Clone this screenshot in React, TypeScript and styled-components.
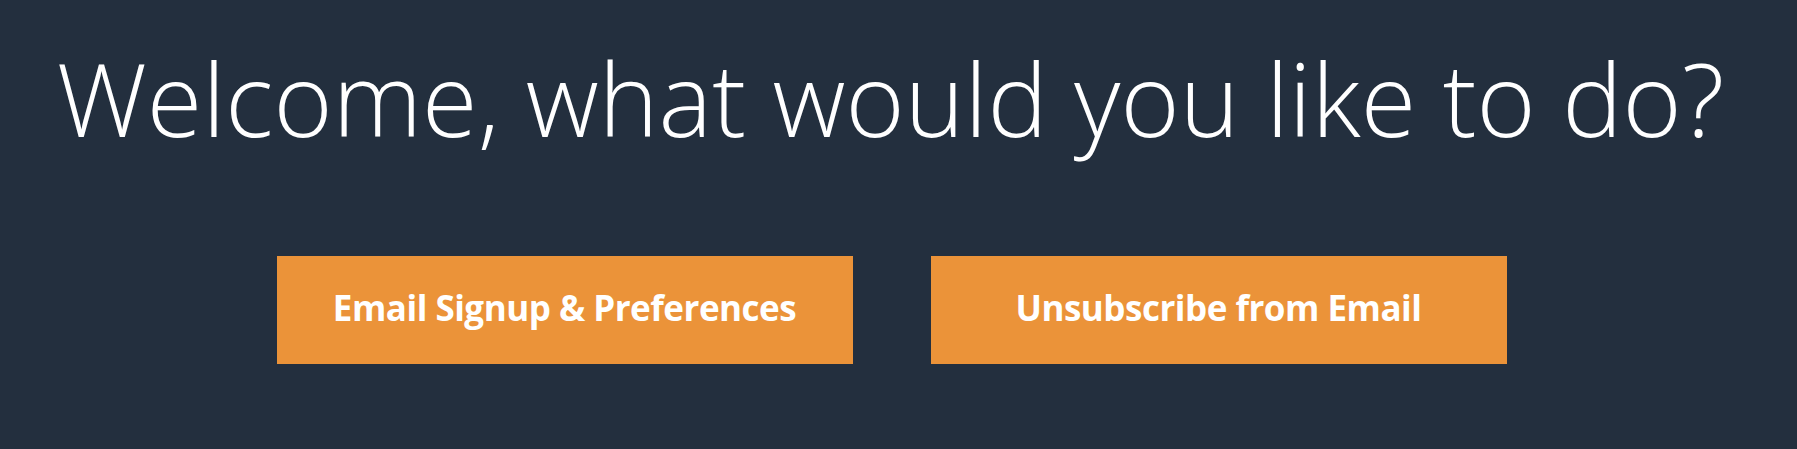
import styled, { createGlobalStyle } from "styled-components";

const GlobalStyle = createGlobalStyle`
  html, body {
    margin: 0;
    padding: 0;
    background: #232f3e;
  }
`;

const Page = styled.div`
  min-height: 449px;
  background: #232f3e;
  color: #fff;
  display: flex;
  flex-direction: column;
  align-items: center;
  padding-top: 38px;
  box-sizing: border-box;
  font-family: "Open Sans", "Liberation Sans", sans-serif;
`;

const Title = styled.h1`
  margin: 0 16px 0 0;
  font-size: 101px;
  font-weight: 300;
  line-height: 1.2;
  letter-spacing: 0.1px;
  white-space: nowrap;
`;

const Actions = styled.div`
  display: flex;
  gap: 78px;
  margin-top: 97px;
  margin-right: 14px;
`;

const ActionButton = styled.a`
  width: 576px;
  height: 108px;
  padding-bottom: 6px;
  box-sizing: border-box;
  display: flex;
  align-items: center;
  justify-content: center;
  background: #eb9339;
  color: #fff;
  font-size: 35px;
  font-weight: 700;
  letter-spacing: -0.5px;
  text-decoration: none;
  cursor: pointer;
`;

const App: React.FC = () => {
  return (
    <Page>
      <GlobalStyle />
      <Title>Welcome, what would you like to do?</Title>
      <Actions>
        <ActionButton>Email Signup &amp; Preferences</ActionButton>
        <ActionButton>Unsubscribe from Email</ActionButton>
      </Actions>
    </Page>
  );
};

export default App;
